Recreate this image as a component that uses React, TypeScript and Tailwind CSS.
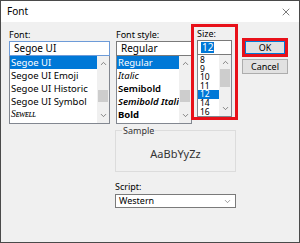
import { ChevronUp, ChevronDown, X } from 'lucide-react'

const font = { fontFamily: '"Noto Sans", "Open Sans", sans-serif' }

function ScrollBar({ thumbTop, thumbH }: { thumbTop: number; thumbH: number }) {
  return (
    <div className="relative w-[12px] h-full bg-[#f0f0f0] flex flex-col items-center justify-between py-[3px]">
      <ChevronUp size={9} strokeWidth={2} className="text-[#606060]" />
      <div className="absolute left-[1px] right-[1px] bg-[#cdcdcd]" style={{ top: thumbTop, height: thumbH }} />
      <ChevronDown size={9} strokeWidth={2} className="text-[#606060]" />
    </div>
  )
}

export default function App() {
  return (
    <div className="w-[300px] h-[243px] bg-[#f0f0f0] border border-[#4a4a4a] text-black flex flex-col overflow-hidden" style={font}>
      {/* title bar */}
      <div className="h-[21px] bg-white flex items-center justify-between pl-[6px] pr-[7px] shrink-0">
        <span className="text-[10px]">Font</span>
        <X size={12} strokeWidth={1.3} className="text-[#333]" />
      </div>

      <div className="flex pl-[8px] pt-[2px]">
        {/* Font column */}
        <div className="w-[101px] flex flex-col">
          <div className="h-[17px] flex items-end pb-[1px] text-[9px] leading-[10px]">Font:</div>
          <div className="h-[15px] border border-[#6d9bd8] bg-white flex items-center pl-[4px] text-[10px]">Segoe UI</div>
          <div className="h-[68px] border border-[#828790] border-t-0 bg-white flex">
            <div className="flex-1 flex flex-col text-[9.5px] leading-[13px] whitespace-nowrap overflow-hidden">
              <div className="bg-[#0078d7] text-white pl-[1px]">Segoe UI</div>
              <div className="pl-[1px]">Segoe UI Emoji</div>
              <div className="pl-[1px]">Segoe UI Historic</div>
              <div className="pl-[1px]">Segoe UI Symbol</div>
              <div className="pl-[1px] italic" style={{ fontFamily: '"Liberation Serif", serif' }}>Sᴇᴡᴇʟʟ</div>
            </div>
            <ScrollBar thumbTop={34} thumbH={12} />
          </div>
        </div>

        {/* Font style column */}
        <div className="w-[76px] ml-[6px] flex flex-col">
          <div className="h-[17px] flex items-end pb-[1px] text-[9px] leading-[10px]">Font style:</div>
          <div className="h-[15px] border border-[#7a7a7a] bg-white flex items-center pl-[4px] text-[10px]">Regular</div>
          <div className="h-[68px] border border-[#828790] border-t-0 bg-white flex">
            <div className="flex-1 flex flex-col text-[9.5px] leading-[13px] overflow-hidden whitespace-nowrap">
              <div className="bg-[#0078d7] text-white pl-[1px]">Regular</div>
              <div className="pl-[1px] italic">Italic</div>
              <div className="pl-[1px] font-semibold">Semibold</div>
              <div className="pl-[1px] font-semibold italic">Semibold Italic</div>
              <div className="pl-[1px] font-bold">Bold</div>
            </div>
            <ScrollBar thumbTop={34} thumbH={12} />
          </div>
        </div>

        {/* Size column */}
        <div className="w-[47px] h-[96px] -ml-[1px] border-[3px] border-[#e8111a] flex flex-col px-[3px]">
          <div className="h-[13px] flex items-end pb-[1px] text-[9px] leading-[10px]">Size:</div>
          <div className="h-[15px] border border-[#7a7a7a] bg-white flex items-center pl-[3px] text-[10px]">
            <span className="bg-[#0078d7] text-white leading-[11px] px-[1px]">12</span>
          </div>
          <div className="h-[62px] border border-[#828790] border-t-0 bg-white flex">
            <div className="flex-1 flex flex-col text-[8.5px] leading-[8.6px] pt-[1px] overflow-hidden">
              <div className="pl-[2px]">8</div>
              <div className="pl-[2px]">9</div>
              <div className="pl-[2px]">10</div>
              <div className="pl-[2px]">11</div>
              <div className="pl-[2px] bg-[#0078d7] text-white">12</div>
              <div className="pl-[2px]">14</div>
              <div className="pl-[2px]">16</div>
            </div>
            <ScrollBar thumbTop={14} thumbH={18} />
          </div>
        </div>

        {/* Buttons */}
        <div className="w-[46px] ml-[4px] flex flex-col pt-[14px] gap-[2px]">
          <div className="h-[19px] border-[3px] border-[#e8111a]">
            <div className="h-full border border-[#0078d7] bg-[#e1e1e1] flex items-center justify-center text-[9px]">OK</div>
          </div>
          <div className="h-[15px] border border-[#adadad] bg-[#e1e1e1] flex items-center justify-center text-[9px]">Cancel</div>
        </div>
      </div>

      {/* Sample + Script */}
      <div className="ml-[114px] w-[121px] mt-[6px] flex flex-col">
        <div className="relative h-[42px] border border-[#dcdcdc] flex items-center justify-center">
          <span className="absolute -top-[7px] left-[6px] bg-[#f0f0f0] px-[1px] text-[9px] text-[#333]">Sample</span>
          <span className="text-[11px] text-[#333] mt-[6px]">AaBbYyZz</span>
        </div>
        <div className="mt-[10px] text-[9px] leading-[10px]">Script:</div>
        <div className="mt-[2px] h-[14px] border border-[#7a7a7a] bg-white flex items-center justify-between pl-[3px] pr-[3px] text-[9px]">
          <span>Western</span>
          <ChevronDown size={9} strokeWidth={1.5} className="text-[#555]" />
        </div>
      </div>
    </div>
  )
}
